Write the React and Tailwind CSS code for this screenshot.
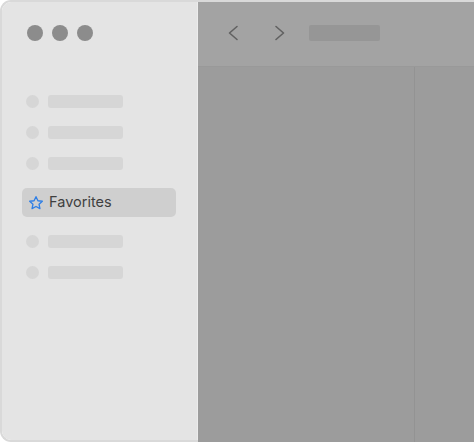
import React from 'react';

const Placeholder = () => (
    <div className="flex items-center h-[31px] pl-[4px]">
        <div className="w-[13px] h-[13px] rounded-full bg-[#d6d6d6] shrink-0" />
        <div className="ml-[9px] w-[75px] h-[13px] rounded-[3px] bg-[#d6d6d6]" />
    </div>
);

const Star = () => (
    <svg width="16" height="16" viewBox="0 0 24 24" fill="none" stroke="#2f7fe6" strokeWidth="2" strokeLinejoin="round">
        <path d="M12 2.5l2.9 6.1 6.6.8-4.9 4.5 1.3 6.6L12 17.2l-5.9 3.3 1.3-6.6-4.9-4.5 6.6-.8z" />
    </svg>
);

const Chevron = ({ dir }) => (
    <svg width="12" height="16" viewBox="0 0 12 16" fill="none" stroke="#616161" strokeWidth="1.6" strokeLinecap="round" strokeLinejoin="round">
        {dir === 'left' ? <polyline points="10,1.5 2.5,8 10,14.5" /> : <polyline points="2,1.5 9.5,8 2,14.5" />}
    </svg>
);

export default function App() {
    return (
        <div className="w-[474px] h-[442px] bg-white" style={{ fontFamily: 'Inter, "Liberation Sans", sans-serif' }}>
            {/* Window, cut off on the right and bottom */}
            <div className="w-full h-[442px] flex rounded-l-[11px] border-2 border-r-0 border-[#d9d9d9]">
                {/* Sidebar */}
                <div className="w-[196px] h-full bg-[#e4e4e4] rounded-l-[9px] border-r border-[#ececec] shrink-0 flex flex-col pl-[20px]">
                    <div className="flex gap-[9px] pt-[23px] pl-[5px]">
                        <div className="w-[16px] h-[16px] rounded-full bg-[#8c8c8c]" />
                        <div className="w-[16px] h-[16px] rounded-full bg-[#8c8c8c]" />
                        <div className="w-[16px] h-[16px] rounded-full bg-[#8c8c8c]" />
                    </div>
                    <div className="mt-[45px] flex flex-col">
                        <Placeholder />
                        <Placeholder />
                        <Placeholder />
                        <div className="my-[9px] w-[154px] h-[29px] rounded-[5px] bg-[#cfcfcf] flex items-center pl-[6px] gap-[5px]">
                            <Star />
                            <span className="text-[14.5px] text-[#3f3f3f] leading-none">Favorites</span>
                        </div>
                        <Placeholder />
                        <Placeholder />
                    </div>
                </div>

                {/* Main */}
                <div className="relative flex-1 -mb-[2px] flex flex-col bg-[#9c9c9c]">
                    <div className="h-[65px] shrink-0 bg-[#a3a3a3] border-b border-[#999999] flex items-center pl-[29px] pb-[2px]">
                        <Chevron dir="left" />
                        <div className="ml-[35px]"><Chevron dir="right" /></div>
                        <div className="ml-[23px] w-[71px] h-[16px] rounded-[2px] bg-[#969696]" />
                    </div>
                    <div className="flex-1 flex">
                        <div className="w-[217px] border-r border-[#939393]" />
                        <div className="flex-1" />
                    </div>
                </div>
            </div>
        </div>
    );
}
